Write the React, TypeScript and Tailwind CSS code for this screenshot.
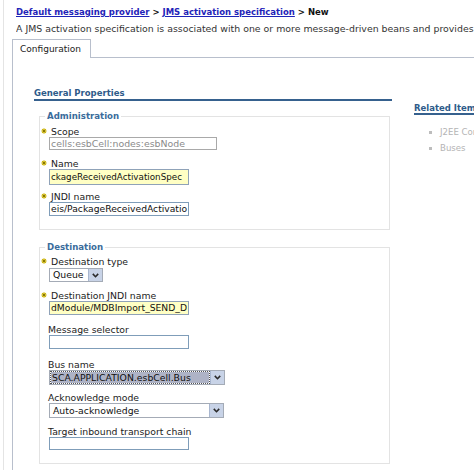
import type { ReactNode } from "react";

function Star() {
  return (
    <svg width="6" height="6" viewBox="0 0 6 6" className="ml-[1px] -mt-[2px] shrink-0">
      <path d="M3 0.3 V5.7 M0.3 3 H5.7 M1.1 1.1 L4.9 4.9 M4.9 1.1 L1.1 4.9" stroke="#c9b000" strokeWidth="1.1" />
      <circle cx="3" cy="3" r="0.9" fill="#6b5e00" />
    </svg>
  );
}

function Chevron() {
  return (
    <svg width="7" height="5" viewBox="0 0 7 5">
      <path d="M0.8 0.9 L3.5 3.7 L6.2 0.9" fill="none" stroke="#2a2a2a" strokeWidth="1.6" />
    </svg>
  );
}

interface FieldProps {
  label: string;
  required?: boolean;
  className?: string;
  children: ReactNode;
}

function Field({ label, required, className, children }: FieldProps) {
  return (
    <div className={className}>
      <div className="flex items-center h-[11px] leading-[11px] text-[9.3px] text-[#222] whitespace-nowrap">
        {required ? (
          <>
            <Star />
            <span className="ml-[4px]">{label}</span>
          </>
        ) : (
          <span className="ml-[8px]">{label}</span>
        )}
      </div>
      <div className="ml-[9px]">{children}</div>
    </div>
  );
}

function TextBox({ value, className }: { value: string; className: string }) {
  return (
    <div
      className={`flex items-center overflow-hidden whitespace-nowrap border leading-[12px] pl-[1px] ${className}`}
    >
      {value}
    </div>
  );
}

function SelectBox({
  value,
  className,
  selected,
}: {
  value: string;
  className: string;
  selected?: boolean;
}) {
  return (
    <div className={`flex border border-[#a4abb6] bg-white ${className}`}>
      <div className="flex-1 min-w-0 flex items-center pl-[1px] pr-[1px] overflow-hidden whitespace-nowrap text-[9.3px] leading-[12px] text-[#111]">
        {selected ? (
          <span className="flex-1 bg-[#aeb3c6] outline outline-1 outline-dotted outline-[#555] pl-[1px] leading-[11px]">
            {value}
          </span>
        ) : (
          <span className="pl-[2px]">{value}</span>
        )}
      </div>
      <div className="w-[14px] flex items-center justify-center bg-[#c8d3e7] border-l border-[#a8b6cf]">
        <Chevron />
      </div>
    </div>
  );
}

export default function App() {
  return (
    <div className="w-[474px] h-[470px] overflow-hidden bg-white font-['DejaVu_Sans',Verdana,sans-serif] text-[#222]">
      <div className="ml-[3px] h-full border-l border-[#e4e4e4] pl-[8px]">
        {/* breadcrumb */}
        <div className="ml-[4px] pt-[6px] leading-[12px] text-[8.5px] font-bold whitespace-nowrap text-[#111]">
          <span className="text-[#1f24b8] underline">Default messaging provider</span>
          {" > "}
          <span className="text-[#1f24b8] underline">JMS activation specification</span>
          {" > New"}
        </div>
        <div className="ml-[4px] mt-[5px] leading-[12px] text-[9.4px] whitespace-nowrap overflow-hidden text-[#333]">
          A JMS activation specification is associated with one or more message-driven beans and provides
        </div>

        {/* tab */}
        <div className="mt-[4px] flex">
          <div className="w-[79px] h-[19px] border-t border-l border-r border-[#b8bfcc] pl-[7px] leading-[18px] text-[9px] text-[#222]">
            Configuration
          </div>
          <div className="flex-1 h-[19px] border-b border-[#b8bfcc]" />
        </div>

        <div className="border-l border-[#b8bfcc] h-full pl-[21px] flex">
          {/* main column */}
          <div className="w-[358px] shrink-0">
            <div className="mt-[30px] leading-[11px] text-[8.5px] font-bold text-[#2e5b8a] border-b-2 border-[#36618e]">
              General Properties
            </div>

            <fieldset className="mt-[10px] ml-[5px] w-[351px] border border-[#e3e3e3] pb-[13px]">
              <legend className="ml-[5px] px-[2px] leading-[11px] text-[8.6px] font-bold text-[#3a6c9c]">
                Administration
              </legend>
              <Field label="Scope" required className="mt-[4px]">
                <TextBox
                  value="cells:esbCell:nodes:esbNode"
                  className="w-[168px] h-[13px] text-[9.4px] border-[#a9a9a9] text-[#8a8a8a] bg-white"
                />
              </Field>
              <Field label="Name" required className="mt-[8px]">
                <TextBox
                  value="ckageReceivedActivationSpec"
                  className="w-[140px] h-[16px] text-[8.75px] border-[#8fa2b8] bg-[#ffffc4] text-[#111]"
                />
              </Field>
              <Field label="JNDI name" required className="mt-[6px]">
                <TextBox
                  value="eis/PackageReceivedActivatio"
                  className="w-[140px] h-[14px] text-[9.2px] border-[#7f9db9] bg-white text-[#111]"
                />
              </Field>
            </fieldset>

            <fieldset className="mt-[12px] ml-[5px] w-[351px] border border-[#e3e3e3] pb-[13px]">
              <legend className="ml-[5px] px-[2px] leading-[11px] text-[8.6px] font-bold text-[#3a6c9c]">
                Destination
              </legend>
              <Field label="Destination type" required className="mt-[3px]">
                <SelectBox value="Queue" className="mt-[1px] w-[54px] h-[14px]" />
              </Field>
              <Field label="Destination JNDI name" required className="mt-[8px]">
                <TextBox
                  value="dModule/MDBImport_SEND_D"
                  className="w-[140px] h-[14px] text-[9.2px] border-[#8fa2b8] bg-[#ffffc4] text-[#111]"
                />
              </Field>
              <Field label="Message selector" className="mt-[9px]">
                <TextBox value="" className="w-[140px] h-[14px] border-[#7f9db9] bg-white" />
              </Field>
              <Field label="Bus name" className="mt-[10px]">
                <SelectBox
                  value="SCA.APPLICATION.esbCell.Bus"
                  selected
                  className="w-[176px] h-[15px]"
                />
              </Field>
              <Field label="Acknowledge mode" className="mt-[7px]">
                <SelectBox value="Auto-acknowledge" className="w-[175px] h-[15px]" />
              </Field>
              <Field label="Target inbound transport chain" className="mt-[8px]">
                <TextBox value="" className="w-[140px] h-[13px] border-[#7f9db9] bg-white" />
              </Field>
            </fieldset>
          </div>

          {/* related items */}
          <div className="ml-[22px] flex-1 min-w-0 overflow-hidden">
            <div className="mt-[45px] leading-[10px] text-[8.5px] font-bold text-[#2e5b8a] border-b-2 border-[#36618e] whitespace-nowrap">
              Related Items
            </div>
            <div className="mt-[11px] pl-[15px] text-[8.6px] leading-[12px] text-[#b4b4b4] whitespace-nowrap">
              <div className="flex items-center">
                <span className="w-[3px] h-[3px] bg-[#bdbdbd] shrink-0" />
                <span className="ml-[8px]">J2EE Connector Architecture (J2C)</span>
              </div>
              <div className="mt-[4px] flex items-center">
                <span className="w-[3px] h-[3px] bg-[#bdbdbd] shrink-0" />
                <span className="ml-[8px]">Buses</span>
              </div>
            </div>
          </div>
        </div>
      </div>
    </div>
  );
}
